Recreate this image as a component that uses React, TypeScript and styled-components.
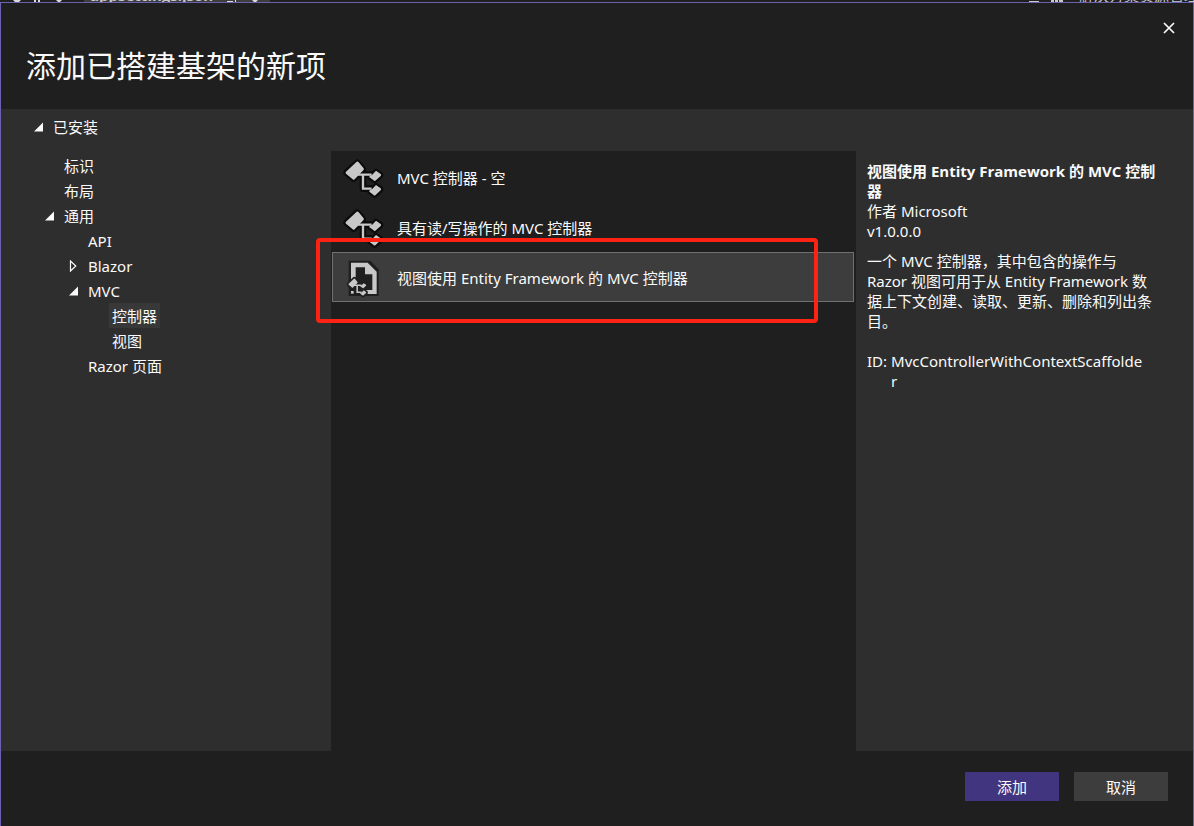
import React from 'react';
import styled, { createGlobalStyle } from 'styled-components';

const GlobalStyle = createGlobalStyle`
  * { box-sizing: border-box; }
  body {
    margin: 0;
    background: #1f1f1f;
    color: #fafafa;
    font: 15px/20px "Noto Sans", "Noto Sans CJK SC", sans-serif;
  }
  button {
    border: 0;
    padding: 0;
    background: none;
    color: inherit;
    font: inherit;
    text-align: left;
  }
  ul { list-style: none; margin: 0; padding: 0; }
  h1, h2, p, dl, dd { margin: 0; }
`;

const Page = styled.div`
  display: flex;
  flex-direction: column;
  min-height: 100vh;
`;

const EditorStrip = styled.div`
  display: flex;
  align-items: flex-end;
  height: 2px;
  overflow: hidden;
  color: #c8c8c8;
  svg { flex: none; align-self: flex-end; }
`;

const EditorTab = styled.span`
  display: flex;
  align-items: flex-start;
  justify-content: space-between;
  height: 17px;
  width: 186px;
  padding: 0 12px 0 6px;
  background: #3d3d3d;
  font-family: "Open Sans", sans-serif;
  font-weight: 700;
`;

const StripSpace = styled.span`
  flex: 1;
`;

const ExplorerTab = styled.span`
  height: 17px;
  width: 115px;
  white-space: nowrap;
`;

const Dialog = styled.main`
  flex: 1;
  display: flex;
  flex-direction: column;
  border: 1px solid #6a62b0;
  border-bottom: 0;
`;

const Header = styled.header`
  display: flex;
  justify-content: space-between;
  height: 106px;
  padding: 16px 15px 0 25px;
`;

const Title = styled.h1`
  padding-top: 27px;
  font-size: 30px;
  line-height: 40px;
  font-weight: 400;
`;

const CloseButton = styled.button`
  width: 18px;
  height: 18px;
  svg { display: block; }
`;

const Body = styled.div`
  flex: 1;
  display: grid;
  grid-template-columns: 330px 1fr 337px;
  background: #2e2e2e;
`;

const TreePane = styled.nav`
  padding-top: 5px;
`;

const TreeGroup = styled.ul`
  padding-top: 14px;
`;

const TreeRow = styled.button<{ $indent: number }>`
  display: flex;
  align-items: center;
  width: 100%;
  height: 25px;
  padding-left: ${p => p.$indent}px;
`;

const ArrowSlot = styled.span`
  display: flex;
  width: 16px;
`;

const TreeLabel = styled.span<{ $selected?: boolean }>`
  padding: 2px 3px 0;
  line-height: 23px;
  background: ${p => (p.$selected ? '#383838' : 'transparent')};
`;

const TemplateList = styled.ul`
  margin-top: 42px;
  padding: 1px 2px 0 1px;
  background: #1f1f1f;
`;

const TemplateItem = styled.li`
  position: relative;
`;

const TemplateButton = styled.button<{ $selected?: boolean }>`
  display: flex;
  align-items: center;
  gap: 7px;
  width: 100%;
  height: 50px;
  padding-left: 8px;
  background: ${p => (p.$selected ? '#3d3d3d' : 'transparent')};
  box-shadow: ${p => (p.$selected ? 'inset 0 0 0 1px #707070' : 'none')};
`;

const TemplateLabel = styled.span`
  padding-top: 2px;
`;

const Highlight = styled.div`
  position: absolute;
  inset: -14px 36px -21px -16px;
  border: 4px solid #fc2314;
  border-radius: 4px;
  pointer-events: none;
`;

const Details = styled.aside`
  padding: 52px 34px 0 11px;
`;

const DetailsTitle = styled.h2`
  font-family: "Open Sans", "Noto Sans CJK SC", sans-serif;
  font-size: 15px;
  line-height: 20px;
  font-weight: 700;
`;

const Description = styled.p`
  padding: 10px 0 20px;
`;

const IdRow = styled.dl`
  display: flex;
  gap: 4px;
  padding-right: 14px;
  dd { word-break: break-all; }
`;

const Footer = styled.footer`
  display: flex;
  justify-content: flex-end;
  gap: 15px;
  height: 75px;
  padding: 21px 25px 0 0;
`;

const ActionButton = styled.button<{ $primary?: boolean }>`
  width: 94px;
  height: 29px;
  text-align: center;
  background: ${p => (p.$primary ? '#41357f' : '#3d3d3d')};
`;

type ArrowState = 'open' | 'closed';

const Arrow = ({ state }: { state: ArrowState }) => (
  <svg width="10" height="12" viewBox="0 0 10 12" aria-hidden="true">
    {state === 'open' ? (
      <path d="M9 1.500V10.500H0Z" fill="#fafafa" />
    ) : (
      <path d="M1.500 1V11L6.800 6Z" fill="none" stroke="#fafafa" strokeWidth="1.200" />
    )}
  </svg>
);

const branch = 'M50 57H95M69 57V99H95';
const nodes =
  'M50 18Q53 16 56 20L71 38Q73 41 70 44L44 71Q41 74 38 71L18 54Q15 51 18 48Z ' +
  'M108 45L122 55Q125 58 122 61L106 75Q103 77 100 73L88 65Q87 62 90 60L96 58Z ' +
  'M108 88L122 98Q125 101 122 104L106 119Q103 121 100 117L88 108Q87 105 90 103L96 101Z';

const ControllerIcon = () => (
  <svg width="50" height="50" viewBox="0 -11 150 150" aria-hidden="true">
    <g stroke="#0b0b0b" fill="#0b0b0b" strokeLinejoin="round" strokeLinecap="round">
      <path d={branch} fill="none" strokeWidth="20" />
      <path d={nodes} strokeWidth="13" />
    </g>
    <path d={branch} fill="none" stroke="#c8c8c8" strokeWidth="7" />
    <path d={nodes} fill="#c8c8c8" />
  </svg>
);

const ViewControllerIcon = () => (
  <svg width="50" height="50" viewBox="93 51 150 150" aria-hidden="true">
    <path d="M119 77H184L209 103V183H119Z" fill="#1f1f1f" />
    <path d="M126 83H176L203 110V177H171V165H190V118H168V97H140V128L126 136Z" fill="#c8c8c8" />
    <g transform="translate(110 122) scale(.5)">
      <path d={nodes} fill="#1f1f1f" stroke="#1f1f1f" strokeWidth="20" strokeLinejoin="round" />
      <path d={branch} fill="none" stroke="#c8c8c8" strokeWidth="9" />
      <path d={nodes} fill="#c8c8c8" />
    </g>
    <path d="M126 168h8v8h-8z" fill="#c8c8c8" />
  </svg>
);

interface TreeNode {
  label: string;
  indent: number;
  arrow?: ArrowState;
  selected?: boolean;
}

const tree: TreeNode[] = [
  { label: '标识', indent: 44 },
  { label: '布局', indent: 44 },
  { label: '通用', indent: 44, arrow: 'open' },
  { label: 'API', indent: 68 },
  { label: 'Blazor', indent: 68, arrow: 'closed' },
  { label: 'MVC', indent: 68, arrow: 'open' },
  { label: '控制器', indent: 92, selected: true },
  { label: '视图', indent: 92 },
  { label: 'Razor 页面', indent: 68 },
];

const templates = [
  { label: 'MVC 控制器 - 空', Icon: ControllerIcon },
  { label: '具有读/写操作的 MVC 控制器', Icon: ControllerIcon },
  { label: '视图使用 Entity Framework 的 MVC 控制器', Icon: ViewControllerIcon, selected: true },
];

const TreeItem = ({ label, indent, arrow, selected }: TreeNode) => (
  <TreeRow type="button" $indent={indent} aria-expanded={arrow ? arrow === 'open' : undefined}>
    <ArrowSlot>{arrow && <Arrow state={arrow} />}</ArrowSlot>
    <TreeLabel $selected={selected}>{label}</TreeLabel>
  </TreeRow>
);

export default function App() {
  return (
    <Page>
      <GlobalStyle />
      <EditorStrip aria-hidden="true">
        <svg width="84" height="2" viewBox="0 0 84 2">
          <path d="M13 0H21L19 2H15ZM34 0h2v2h-2zM38 0h2v2h-2zM56 0h6l-2 2h-2z" fill="#dcdcdc" />
        </svg>
        <EditorTab>
          appsettings.json
          <svg width="32" height="2" viewBox="0 0 32 2">
            <path d="M1 1h6v1H1zM9 0h1v2H9zM26 0h6l-2 2h-2z" fill="#dcdcdc" />
          </svg>
        </EditorTab>
        <StripSpace />
        <svg width="50" height="2" viewBox="0 0 50 2">
          <path d="M0 1h10v1H0zM22 0h3v2h-3zM26 0h3v2h-3zM30 0h4v2h-4z" fill="#c8c8c8" />
        </svg>
        <ExplorerTab>解决方案资源管理器</ExplorerTab>
      </EditorStrip>
      <Dialog>
        <Header>
          <Title>添加已搭建基架的新项</Title>
          <CloseButton type="button" aria-label="关闭">
            <svg width="18" height="18" viewBox="0 0 18 18">
              <path d="M4 4L14 14M14 4L4 14" stroke="#fafafa" strokeWidth="1.700" />
            </svg>
          </CloseButton>
        </Header>
        <Body>
          <TreePane>
            <TreeItem label="已安装" indent={33} arrow="open" />
            <TreeGroup>
              {tree.map(node => (
                <li key={node.label}>
                  <TreeItem {...node} />
                </li>
              ))}
            </TreeGroup>
          </TreePane>
          <TemplateList>
            {templates.map(({ label, Icon, selected }) => (
              <TemplateItem key={label}>
                <TemplateButton type="button" $selected={selected}>
                  <Icon />
                  <TemplateLabel>{label}</TemplateLabel>
                </TemplateButton>
                {selected && <Highlight />}
              </TemplateItem>
            ))}
          </TemplateList>
          <Details>
            <DetailsTitle>视图使用 Entity Framework 的 MVC 控制器</DetailsTitle>
            <p>作者 Microsoft</p>
            <p>v1.0.0.0</p>
            <Description>
              一个 MVC 控制器，其中包含的操作与 Razor 视图可用于从 Entity Framework 数据上下文创建、读取、更新、删除和列出条目。
            </Description>
            <IdRow>
              <dt>ID:</dt>
              <dd>MvcControllerWithContextScaffolder</dd>
            </IdRow>
          </Details>
        </Body>
        <Footer>
          <ActionButton type="button" $primary>添加</ActionButton>
          <ActionButton type="button">取消</ActionButton>
        </Footer>
      </Dialog>
    </Page>
  );
}
